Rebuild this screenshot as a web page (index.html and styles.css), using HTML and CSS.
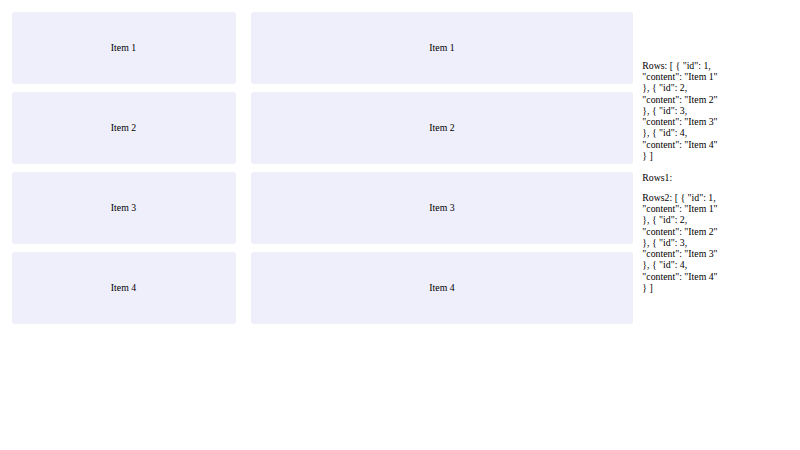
FILE: index.html
```html
<!DOCTYPE html>
<html>
<head>
<meta charset="utf-8">
<link rel="stylesheet" href="styles.css">
</head>
<body>
<div class="page">
  <div class="col col1">
    <div class="card">Item 1</div>
    <div class="card">Item 2</div>
    <div class="card">Item 3</div>
    <div class="card">Item 4</div>
  </div>
  <div class="col col2">
    <div class="card">Item 1</div>
    <div class="card">Item 2</div>
    <div class="card">Item 3</div>
    <div class="card">Item 4</div>
  </div>
  <div class="info">
    <p class="p1">Rows: [ { "id": 1, "content": "Item 1" }, { "id": 2, "content": "Item 2" }, { "id": 3, "content": "Item 3" }, { "id": 4, "content": "Item 4" } ]</p>
    <p class="p2">Rows1:</p>
    <p class="p3">Rows2: [ { "id": 1, "content": "Item 1" }, { "id": 2, "content": "Item 2" }, { "id": 3, "content": "Item 3" }, { "id": 4, "content": "Item 4" } ]</p>
  </div>
</div>
</body>
</html>
```
FILE: styles.css
```css
body {
  margin: 0;
  font-family: "Liberation Serif", "Times New Roman", serif;
  font-size: 9.8px;
  line-height: 11.24px;
  color: #000;
  background: #fff;
}
.page {
  display: flex;
  align-items: flex-start;
  padding: 11.7px 0 0 11.5px;
}
.col {
  display: flex;
  flex-direction: column;
  gap: 7.5px;
  flex: none;
}
.col1 {
  width: 224px;
}
.col2 {
  width: 382px;
  margin-left: 15.5px;
}
.card {
  height: 72.5px;
  background: #efeffc;
  border-radius: 3px;
  display: flex;
  align-items: center;
  justify-content: center;
}
.info {
  width: 82px;
  margin-left: 9.3px;
  margin-top: 48.3px;
  flex: none;
}
.info p {
  margin: 0;
}
.info .p1 {
  margin-bottom: 11px;
}
.info .p2 {
  margin-bottom: 8.6px;
}
```
